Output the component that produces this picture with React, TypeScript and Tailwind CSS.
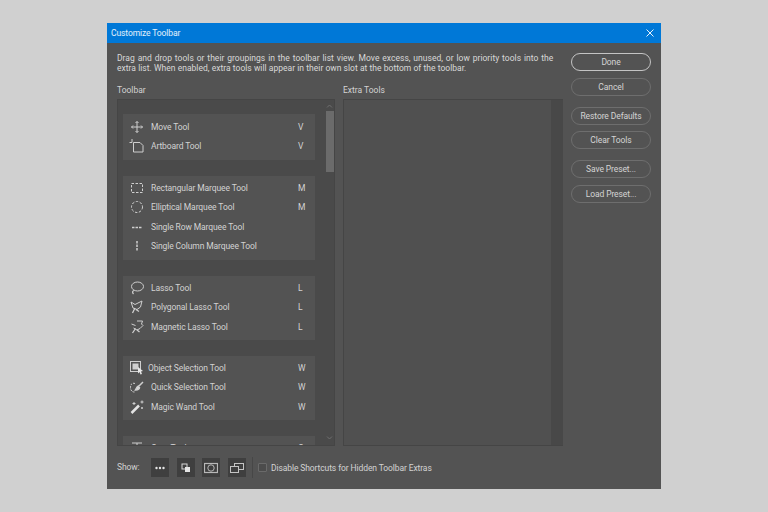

import React from "react";

const S = { fill: "none", stroke: "#cfcfcf", strokeWidth: 1 } as const;

const I = ({ children }: { children: React.ReactNode }) => (
  <svg width="16" height="16" viewBox="0 0 16 16" className="shrink-0" {...S}>
    {children}
  </svg>
);

const icons: Record<string, React.ReactNode> = {
  move: (
    <I>
      <path d="M8 2.500v11M2.500 8h11" />
      <path d="M6.500 4 8 2.500 9.500 4M6.500 12 8 13.500 9.500 12M4 6.500 2.500 8 4 9.500M12 6.500 13.500 8 12 9.500" />
    </I>
  ),
  artboard: (
    <I>
      <path d="M4.500 4.500H11l3 3v6.500H4.500z" />
      <path d="M3 1v3.500H0.500" />
    </I>
  ),
  rect: (
    <I>
      <rect x="2.500" y="3.500" width="11" height="9" strokeDasharray="2.500 1.500" />
    </I>
  ),
  ellipse: (
    <I>
      <circle cx="8" cy="8" r="5.500" strokeDasharray="2.500 1.500" />
    </I>
  ),
  row: (
    <I>
      <path d="M3 8.500h10" strokeWidth="1.500" strokeDasharray="2.500 1" />
    </I>
  ),
  col: (
    <I>
      <path d="M8 3v10" strokeWidth="1.500" strokeDasharray="2.500 1" />
    </I>
  ),
  lasso: (
    <I>
      <ellipse cx="8.500" cy="6.500" rx="6" ry="4.500" />
      <path d="M5 10.500c-1.500 .5-2 2-.500 3.500" strokeWidth="1.300" />
    </I>
  ),
  poly: (
    <I>
      <path d="M2 3l4 2.500 7-3.500-1.500 6L8 10.500 4 9z" />
      <path d="M6 9l-2.500 5M7 10.500l3 2" strokeWidth="1.300" />
    </I>
  ),
  magnetic: (
    <I>
      <path d="M2.500 5l4 1.500M8 2h5.500l-1 3 1.500 1.500-3 3L8 11 4.500 9" />
      <path d="M6.500 9.500l-3 4.500M8 11l2.500 2" strokeWidth="1.300" />
    </I>
  ),
  object: (
    <I>
      <rect x="1.500" y="1.500" width="10" height="10" />
      <rect x="4" y="4" width="5" height="5" fill="#cfcfcf" />
      <path d="M9 7l5 4-2 .500 1 2.500-1.500.500-1-2.500-1.500 1.500z" fill="#e8e8e8" stroke="none" />
    </I>
  ),
  quick: (
    <I>
      <path d="M6 4.500c-3-1-4.500 1-4.500 4s1.500 4.500 4 4.500" strokeDasharray="2 1" />
      <path d="M14 3 9.500 7.500M9.500 7c-2 .500-2 2.500-3 4 2 0 4-1 4-3" fill="#e0e0e0" strokeWidth="1.500" />
    </I>
  ),
  wand: (
    <I>
      <path d="M2.500 14 10 6.500" strokeWidth="2.500" stroke="#e4e4e4" />
      <path d="M5 3v3M3.500 4.500h3M13 1.500v3M11.500 3h3M13 8v2M12 9h2" />
    </I>
  ),
  type: (
    <I>
      <path d="M3 3h10M8 3v10M5 8h6" />
    </I>
  ),
};

type Tool = { icon: string; name: string; key?: string; tight?: boolean };

const groups: { tools: Tool[]; cls: string }[] = [
  {
    cls: "mb-4 pt-[3px] h-[46px]",
    tools: [
      { icon: "move", name: "Move Tool", key: "V" },
      { icon: "artboard", name: "Artboard Tool", key: "V" },
    ],
  },
  {
    cls: "mb-4 pt-[2px] h-[84px]",
    tools: [
      { icon: "rect", name: "Rectangular Marquee Tool", key: "M" },
      { icon: "ellipse", name: "Elliptical Marquee Tool", key: "M" },
      { icon: "row", name: "Single Row Marquee Tool" },
      { icon: "col", name: "Single Column Marquee Tool" },
    ],
  },
  {
    cls: "mb-[16px] pt-[2px] h-[64px]",
    tools: [
      { icon: "lasso", name: "Lasso Tool", key: "L" },
      { icon: "poly", name: "Polygonal Lasso Tool", key: "L" },
      { icon: "magnetic", name: "Magnetic Lasso Tool", key: "L" },
    ],
  },
  {
    cls: "mb-4 pt-[2px] h-[64px]",
    tools: [
      { icon: "object", name: "Object Selection Tool", key: "W", tight: true },
      { icon: "quick", name: "Quick Selection Tool", key: "W" },
      { icon: "wand", name: "Magic Wand Tool", key: "W" },
    ],
  },
  {
    cls: "pt-[2px] h-[64px]",
    tools: [{ icon: "type", name: "Crop Tool", key: "C" }],
  },
];

const ToolRow = ({ t }: { t: Tool }) => (
  <div className="flex items-center h-[19.500px] pl-[6px]">
    <div className={t.tight ? "w-[19px] shrink-0" : "w-[22px] shrink-0"}>{icons[t.icon]}</div>
    <span className="flex-1 whitespace-nowrap pt-[1px]">{t.name}</span>
    <span className="w-[17px] shrink-0 pt-[1px]">{t.key}</span>
  </div>
);

const Btn = ({ label, primary, cls }: { label: string; primary?: boolean; cls?: string }) => (
  <button
    className={`w-[80px] h-[18px] rounded-full border text-center leading-[16px] text-[#d4d4d4] ${
      primary ? "border-[#c4c4c4]" : "border-[#6e6e6e]"
    } ${cls ?? ""}`}
  >
    {label}
  </button>
);

const ShowBtn = ({ children }: { children: React.ReactNode }) => (
  <div className="w-[18px] h-[19px] bg-[#3f3f3f] flex items-center justify-center">{children}</div>
);

export default function App() {
  return (
    <div
      className="w-[768px] h-[512px] bg-[#d0d0d0] pt-[23px] pl-[107px] overflow-hidden text-[8.500px] tracking-[-0.1px] text-[#d2d2d2]"
      style={{ fontFamily: 'Roboto, "Liberation Sans", sans-serif' }}
    >
      <div className="w-[554px] h-[466px] bg-[#535353] flex flex-col">
        <div className="h-[20px] bg-[#0078d7] flex items-center justify-between pl-[4px] pr-[7px] text-white/90 shrink-0">
          <span className="pt-[1px]">Customize Toolbar</span>
          <svg width="8" height="8" viewBox="0 0 8 8" fill="none" stroke="#e8f2fb" strokeWidth="1">
            <path d="M0.500 0.500l7 7M7.500 0.500l-7 7" />
          </svg>
        </div>
        <div className="flex flex-1 min-h-0">
          <div className="w-[456px] pl-[10px] shrink-0 flex flex-col">
            <div className="pt-[10px] h-[41px] leading-[10px] w-[440px] text-[#d8d8d8] tracking-[0.03px]">
              <div className="whitespace-nowrap [word-spacing:0.700px]">
                Drag and drop tools or their groupings in the toolbar list view. Move excess, unused, or low priority tools into the
              </div>
              <div className="whitespace-nowrap">
                extra list. When enabled, extra tools will appear in their own slot at the bottom of the toolbar.
              </div>
            </div>
            <div className="flex gap-[8px] h-[15px] items-center pb-[2px] tracking-normal">
              <span className="w-[218px]">Toolbar</span>
              <span>Extra Tools</span>
            </div>
            <div className="flex gap-[8px] h-[347px]">
              <div className="w-[218px] bg-[#4a4a4a] border border-[#454545] flex overflow-hidden relative">
                <div className="flex-1 pl-[5px] pr-[10px] pt-[14px] min-w-0">
                  {groups.map((g, i) => (
                    <div key={i} className={`bg-[#535353] ${g.cls}`}>
                      {g.tools.map((t) => (
                        <ToolRow key={t.name} t={t} />
                      ))}
                    </div>
                  ))}
                </div>
                <div className="w-[9px] shrink-0 flex flex-col items-center">
                  <svg width="7" height="4" viewBox="0 0 7 4" fill="none" stroke="#6e6e6e" className="mt-[4px] mb-[3px]">
                    <path d="M1 3.500l2.500-2.500 2.500 2.500" />
                  </svg>
                  <div className="w-[8px] h-[61px] bg-[#6b6b6b]" />
                  <div className="flex-1" />
                  <svg width="7" height="4" viewBox="0 0 7 4" fill="none" stroke="#6e6e6e" className="mb-[5px]">
                    <path d="M1 0.500l2.500 2.500 2.500-2.500" />
                  </svg>
                </div>
              </div>
              <div className="w-[220px] bg-[#484848] border-l border-t border-b border-[#454545] flex">
                <div className="w-[207px] bg-[#505050]" />
              </div>
            </div>
            <div className="flex items-center mt-[12px] h-[19px]">
              <span className="w-[34px]">Show:</span>
              <div className="flex gap-[7.500px]">
                <ShowBtn>
                  <svg width="10" height="4" viewBox="0 0 10 4" fill="#e4e4e4">
                    <circle cx="1.500" cy="2" r="1.200" />
                    <circle cx="5" cy="2" r="1.200" />
                    <circle cx="8.500" cy="2" r="1.200" />
                  </svg>
                </ShowBtn>
                <ShowBtn>
                  <svg width="10" height="10" viewBox="0 0 10 10">
                    <rect x="1" y="1" width="5" height="5" fill="#3f3f3f" stroke="#d8d8d8" />
                    <rect x="4" y="4" width="5" height="5" fill="#e4e4e4" />
                  </svg>
                </ShowBtn>
                <ShowBtn>
                  <svg width="14" height="12" viewBox="0 0 14 12" fill="none" stroke="#b8b8b8">
                    <rect x="0.500" y="1.500" width="13" height="9" strokeWidth="1.200" />
                    <circle cx="7" cy="6" r="3.200" />
                  </svg>
                </ShowBtn>
                <ShowBtn>
                  <svg width="14" height="12" viewBox="0 0 14 12" fill="#3f3f3f" stroke="#c4c4c4">
                    <rect x="4.500" y="1.500" width="9" height="6" />
                    <rect x="0.500" y="4.500" width="8" height="6" />
                  </svg>
                </ShowBtn>
              </div>
              <div className="w-px h-[21px] bg-[#474747] ml-[6.500px] mr-[5px]" />
              <div className="w-[9px] h-[9px] rounded-[1px] border border-[#6a6a6a] bg-[#4c4c4c] mr-[4px]" />
              <span className="whitespace-nowrap pt-[1px]">Disable Shortcuts for Hidden Toolbar Extras</span>
            </div>
          </div>
          <div className="flex flex-col pl-[8px] pt-[10px]">
            <Btn label="Done" primary />
            <Btn label="Cancel" cls="mt-[7px]" />
            <Btn label="Restore Defaults" cls="mt-[11px]" />
            <Btn label="Clear Tools" cls="mt-[6px]" />
            <Btn label="Save Preset..." cls="mt-[11px]" />
            <Btn label="Load Preset..." cls="mt-[7px]" />
          </div>
        </div>
      </div>
    </div>
  );
}
